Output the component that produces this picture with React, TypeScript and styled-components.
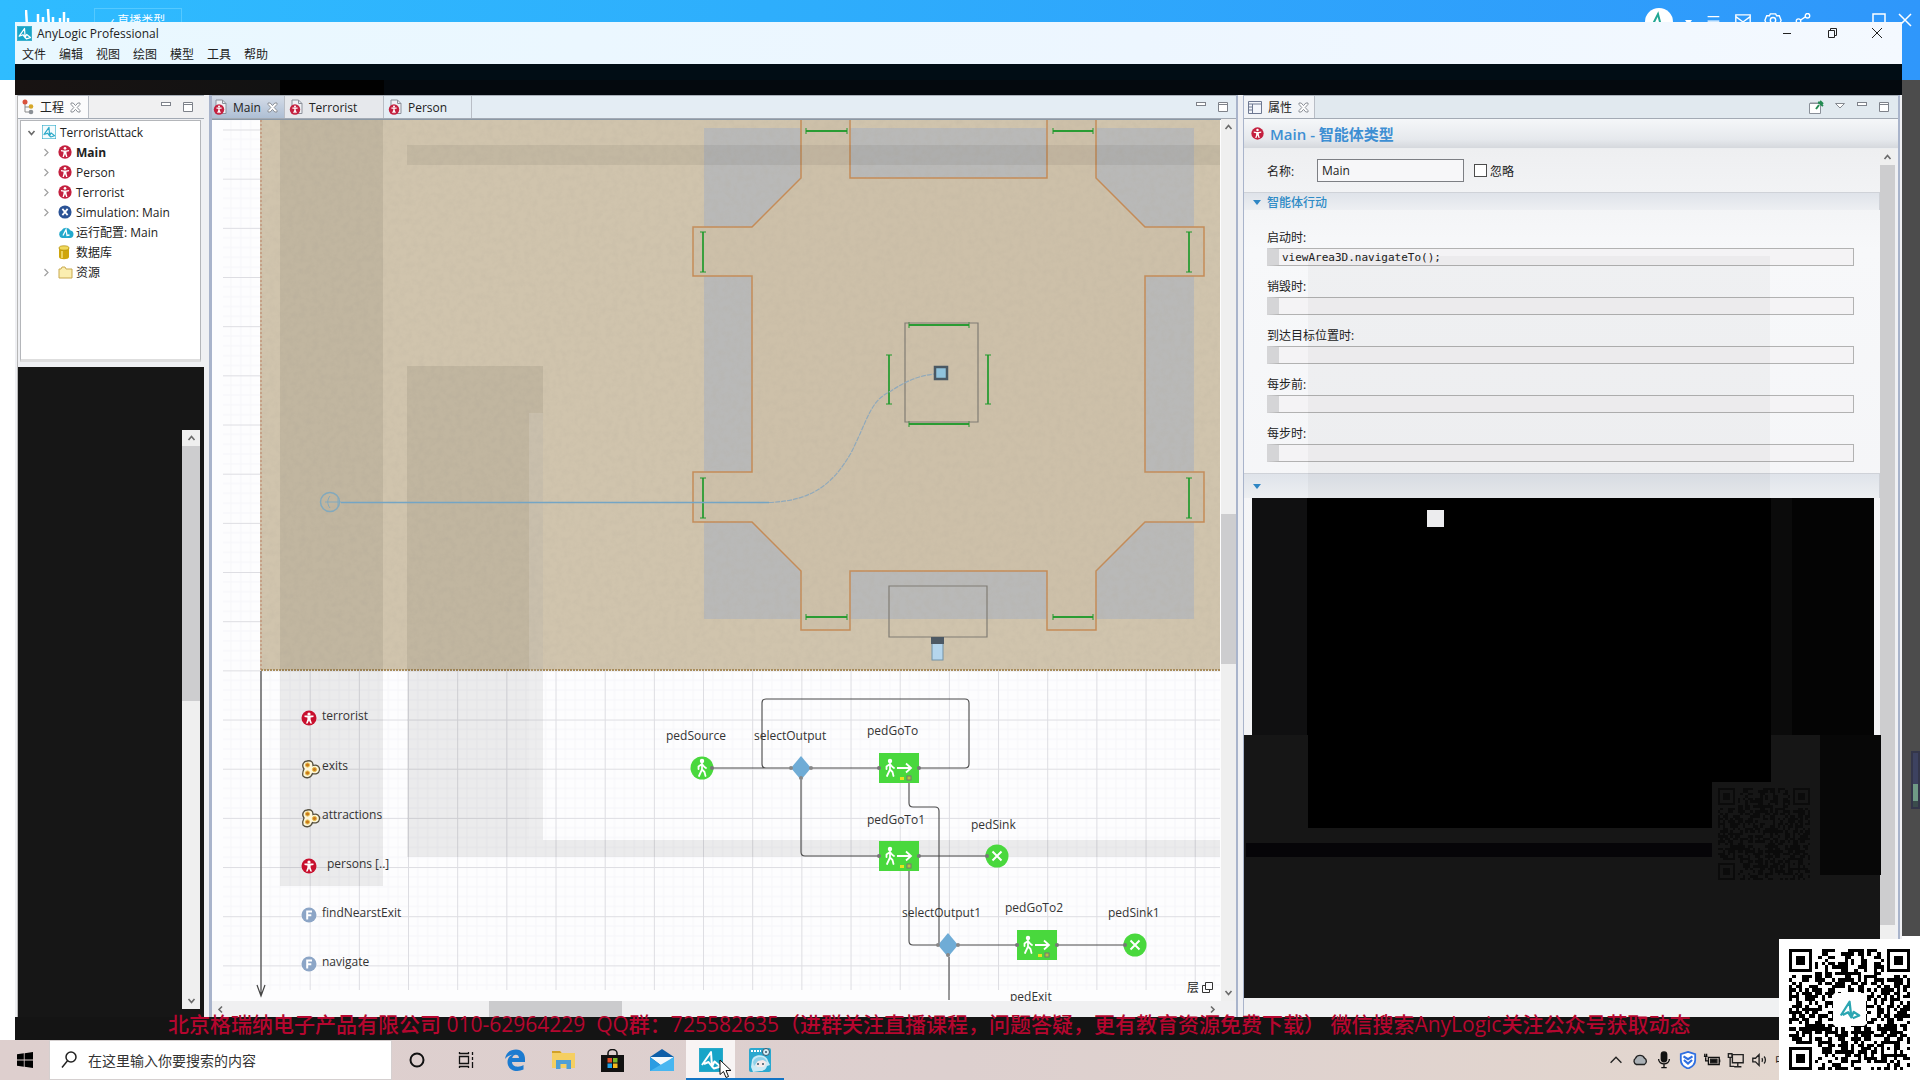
import React from "react";
import styled, { createGlobalStyle } from "styled-components";

const Global = createGlobalStyle`
  * { box-sizing: border-box; }
  body { margin: 0; overflow: hidden; background: #fff; }
  body, button, input { font-family: "Open Sans", "Noto Sans CJK SC", sans-serif; font-size: 12px; color: #222; }
  button { border: 0; padding: 0; background: none; }
  svg { display: block; flex: none; }
`;

/* ---------- shared icons ---------- */

const AgentIcon = ({ size = 14, color = "#c4203f" }: { size?: number; color?: string }) => (
  <svg width={size} height={size} viewBox="0 0 16 16">
    <circle cx="8" cy="8" r="7.6" fill={color} />
    <circle cx="8" cy="3.8" r="1.5" fill="#fff" />
    <path d="M3.4 5.6 6.8 6.2H9.2L12.6 5.6V7L9.7 7.6V9.5L10.8 13.6H9.3L8 10.3 6.7 13.6H5.2L6.3 9.5V7.6L3.4 7Z" fill="#fff" />
  </svg>
);

const LogoMark = ({ size = 16, solid = true }: { size?: number; solid?: boolean }) => (
  <svg width={size} height={size} viewBox="0 0 24 24">
    <rect x="0.5" y="0.5" width="23" height="23" fill={solid ? "#18a5c8" : "#f4fbfd"} stroke="#2aa9c9" />
    <path d="M3 17 12 4 13 18.5 9.5 14 5 16M13 18.5 15.5 13.500 21.500 18.500 15 20.500Z" fill="none" stroke={solid ? "#fff" : "#2aa9c9"} strokeWidth="2" strokeLinejoin="round" />
  </svg>
);

const CloseX = () => (
  <svg width="11" height="11" viewBox="0 0 11 11">
    <path d="M1 1H3.2L5.5 3.6 7.8 1H10V2.4L7.2 5.5 10 8.6V10H7.8L5.5 7.4 3.2 10H1V8.6L3.8 5.5 1 2.4Z" fill="#fff" stroke="#8b8f96" />
  </svg>
);

const DocAgent = () => (
  <svg width="14" height="16" viewBox="0 0 14 16">
    <path d="M3 1H9.5L13 4.5V14.5H3Z" fill="#eef0f4" stroke="#8c919b" />
    <path d="M9.5 1V4.5H13" fill="none" stroke="#8c919b" />
    <circle cx="6" cy="10.5" r="5.2" fill="#c4203f" />
    <path d="M3.4 9.2H8.6M6 9.2V11.5M6 11 4.8 14M6 11 7.2 14" stroke="#fff" strokeWidth="1.3" />
    <circle cx="6" cy="7.6" r="1" fill="#fff" />
  </svg>
);

const Min = () => (
  <svg width="12" height="12" viewBox="0 0 12 12"><rect x="1.5" y="1.5" width="9" height="3" fill="#fff" stroke="#7e828a" /></svg>
);
const Max = () => (
  <svg width="12" height="12" viewBox="0 0 12 12"><path d="M1.5 1.5H10.5V10.5H1.5ZM1.5 3.5H10.5" fill="#fff" stroke="#7e828a" /></svg>
);
const Chevron = ({ dir }: { dir: "up" | "down" | "left" | "right" }) => {
  const d = { up: "M1.5 6 4.5 2.5 7.5 6", down: "M1.5 3 4.5 6.5 7.5 3", left: "M6 1.5 3 4.5 6 7.5", right: "M3 1.5 6 4.5 3 7.5" }[dir];
  return <svg width="9" height="9" viewBox="0 0 9 9"><path d={d} fill="none" stroke="#6a6a6a" strokeWidth="1.6" /></svg>;
};

/* ---------- live-stream client behind the window ---------- */

const Desktop = styled.div`
  position: relative;
  height: 100vh;
  display: flex;
  flex-direction: column;
`;
const LiveHeader = styled.header`
  height: 80px;
  flex: none;
  display: flex;
  align-items: flex-start;
  padding: 8px 8px 0 25px;
  background: linear-gradient(90deg, #2fbcff, #2eaefc 40%, #2f97fb 100%);
`;
const LiveBack = styled.button`
  width: 88px;
  height: 26px;
  margin-left: 24px;
  border: 1px solid #55c9ff;
  color: #fff;
  line-height: 20px;
`;
const LiveTools = styled.div`
  display: flex;
  align-items: center;
  margin-left: auto;
  gap: 12px;
  color: #fff;
`;
const LiveGap = styled.div`
  width: 36px;
`;
const LiveBody = styled.div`
  flex: 1;
  display: flex;
  justify-content: flex-end;
`;
const LiveSide = styled.div`
  width: 18px;
  height: calc(100% - 104px);
  padding-top: 671px;
  background: #4c4c4c;
`;
const Meter = styled.div`
  height: 58px;
  margin-left: 9px;
  border: 2px solid #34364a;
  background: linear-gradient(#3d4260 58%, #6f9a86 58% 88%, #3b4c4c 88%);
`;

/* ---------- window frame ---------- */

const Win = styled.main`
  position: absolute;
  inset: 22px 18px 40px 15px;
  display: flex;
  flex-direction: column;
  background: #eff0f3;
`;
const TitleBar = styled.div`
  height: 22px;
  flex: none;
  display: flex;
  align-items: center;
  padding: 0 18px 0 2px;
  gap: 5px;
  background: linear-gradient(90deg, #e9f8ff, #edf6ff 60%, #f4f9ff);
`;
const WinButtons = styled.div`
  margin-left: auto;
  display: flex;
  gap: 31px;
`;
const MenuBar = styled.nav`
  height: 20px;
  flex: none;
  display: flex;
  gap: 13px;
  padding: 0 0 1px 7px;
  background: linear-gradient(90deg, #e9f8ff, #edf6ff 60%, #f4f9ff);
`;
const Strip = styled.div`
  height: 31px;
  flex: none;
  background:
    linear-gradient(90deg, #181312, #121212 265px, #010101 265px 369px, transparent 369px) 0 16px no-repeat,
    linear-gradient(#010d15 16px, #04090e 16px);
`;
const Workspace = styled.div`
  flex: 1;
  min-height: 0;
  display: grid;
  grid-template-columns: 187px minmax(0, 1fr) 657px;
  gap: 5px;
  padding: 0 2px;
`;
const Footer = styled.div`
  height: 23px;
  flex: none;
  background: #141414;
`;
const Ticker = styled.p`
  position: absolute;
  left: 153px;
  bottom: 1px;
  margin: 0;
  font-size: 21px;
  font-weight: 500;
  line-height: 30px;
  white-space: pre;
  color: #b5062f;
`;

/* ---------- panes ---------- */

const Pane = styled.section`
  min-width: 0;
  min-height: 0;
  display: flex;
  flex-direction: column;
`;
const TabRow = styled.div<{ $bg: string }>`
  height: 24px;
  flex: none;
  display: flex;
  background: ${(p) => p.$bg};
  border-top: 1px solid #a9b0b9;
  border-bottom: 1px solid #a3aab4;
`;
const Tab = styled.button<{ $w: number; $pad: number; $bg?: string }>`
  width: ${(p) => p.$w}px;
  display: flex;
  align-items: center;
  gap: 6px;
  padding-left: ${(p) => p.$pad}px;
  background: ${(p) => p.$bg ?? "transparent"};
  border-right: 1px solid #b9bec6;
`;
const PaneTools = styled.div<{ $end: number }>`
  margin-left: auto;
  display: flex;
  align-items: center;
  gap: 10px;
  padding-right: ${(p) => p.$end}px;
`;
const LeftPane = styled(Pane)`
  border-left: 1px solid #b7b7b7;
`;
const TreeBox = styled.ul`
  list-style: none;
  height: 242px;
  flex: none;
  margin: 1px 3px 5px 2px;
  padding: 1px 0 0 6px;
  background: #fff;
  border: 1px solid #b4b6ba;
  border-bottom: 3px solid #dedede;
`;
const TreeRow = styled.li<{ $depth: number; $bold?: boolean }>`
  height: 20px;
  display: grid;
  grid-template-columns: 13px 16px 1fr;
  gap: 2px;
  align-items: center;
  padding-left: ${(p) => p.$depth * 16}px;
  font-weight: ${(p) => (p.$bold ? 700 : 400)};
  white-space: nowrap;
`;
const Blackout = styled.div`
  flex: 1;
  min-height: 0;
  display: flex;
  justify-content: flex-end;
  padding: 63px 4px 8px 0;
  background: #161616;
`;
const VBar = styled.div<{ $w: number }>`
  width: ${(p) => p.$w}px;
  display: flex;
  flex-direction: column;
  align-items: center;
  justify-content: space-between;
  padding: 4px 0;
  background: #efefef;
`;
const Thumb = styled.div<{ $h: number; $gap?: number }>`
  width: 100%;
  height: ${(p) => p.$h}px;
  margin: ${(p) => p.$gap ?? 3}px 0 auto;
  background: #cdcdcf;
`;

/* ---------- editor ---------- */

const EditorPane = styled(Pane)`
  border: solid #a9b4cb;
  border-width: 0 2px 0 3px;
`;
const EditorBody = styled.div`
  flex: 1;
  min-height: 0;
  display: grid;
  grid-template-columns: minmax(0, 1fr) 15px;
  grid-template-rows: minmax(0, 1fr) 16px;
`;
const Canvas = styled.div`
  position: relative;
  overflow: hidden;
  background: #fdfdfe;
  border-top: 1px solid #8b98a5;
`;
const Drawing = styled.svg`
  position: absolute;
  top: 0;
  left: 0;
`;
const Label = styled.span<{ $x: number; $y: number }>`
  position: absolute;
  left: ${(p) => p.$x - 212}px;
  top: ${(p) => p.$y - 128}px;
  line-height: 16px;
  color: #333;
  white-space: nowrap;
`;
const Layers = styled.button`
  position: absolute;
  right: 8px;
  bottom: 5px;
  display: flex;
  align-items: center;
  gap: 3px;
`;
const HBar = styled.div`
  display: flex;
  align-items: center;
  padding: 0 4px;
  background: #f0f0f1;
`;
const HThumb = styled.div`
  width: 133px;
  height: 100%;
  margin: 0 auto 0 264px;
  background: #cbcbcd;
`;
const Corner = styled.div`
  background: #f0f0f1;
`;

const labels: [string, number, number][] = [
  ["terrorist", 322, 716], ["exits", 322, 766], ["attractions", 322, 815], ["persons [..]", 327, 864],
  ["findNearstExit", 322, 913], ["navigate", 322, 962],
  ["pedSource", 666, 736], ["selectOutput", 754, 736], ["pedGoTo", 867, 731], ["pedGoTo1", 867, 820],
  ["pedSink", 971, 825], ["selectOutput1", 902, 913], ["pedGoTo2", 1005, 908], ["pedSink1", 1108, 913],
  ["pedExit", 1010, 997],
];

const Agent = ({ y }: { y: number }) => (
  <g transform={`translate(309 ${y})`}>
    <circle r="7.5" fill="#c8102e" />
    <circle cy="-4" r="1.6" fill="#fff" />
    <path d="M-4.5 -2.4H4.5V-1L1.6 -.6V1.5L3 5.6H1.4L0 2.4-1.4 5.6H-3L-1.6 1.5V-.6L-4.5 -1Z" fill="#fff" />
  </g>
);
const Collection = ({ y }: { y: number }) => (
  <g transform={`translate(311 ${y})`}>
    <path d="M-4 -8C0 -9 2 -7 2 -3.500C6 -5 9 -2 8.500 1C8 5 4 5.500 1.500 4.500C0 9-5 10-8 7C-9 4-8 2-7 0C-10 -4-7 -8-4 -8Z" fill="#fdf6da" stroke="#55503f" strokeWidth="1.300" />
    {[[-3.5, -4], [-3.5, 4], [3.5, .5]].map(([cx, cy]) => <circle key={`${cx}${cy}`} cx={cx} cy={cy} r="2.1" fill="#c9781c" stroke="#e7c04d" />)}
  </g>
);
const Func = ({ y }: { y: number }) => (
  <g transform={`translate(309 ${y})`}>
    <circle r="7.5" fill="#8ca5c6" />
    <path d="M-1.800 4.500V-3.500H3M-1.800 .3H2.300" fill="none" stroke="#fff" strokeWidth="2" />
  </g>
);
const Walker = () => (
  <g stroke="#fff" fill="none" strokeWidth="1.800" strokeLinecap="round" strokeLinejoin="round">
    <circle cy="-7" r="1.300" fill="#fff" />
    <path d="M0 -4V1.500L-3 8M0 1.500 2.500 4 3.500 8M0 -4-3.500 -1.500-3.500 1M0 -4 2.500 -1 4 0" />
  </g>
);
const GoTo = ({ x, y }: { x: number; y: number }) => (
  <g transform={`translate(${x} ${y})`}>
    <rect x="-20" y="-15" width="40" height="30" fill="#49d83d" />
    <g transform="translate(-9 0)"><Walker /></g>
    <path d="M-2 0H11M7 -4.500 12 0 7 4.500" fill="none" stroke="#fff" strokeWidth="1.800" />
    <rect x="1" y="9" width="4" height="3" fill="#e8e320" />
    <rect x="8" y="8" width="4" height="4" fill="#b6c43a" stroke="#777" />
    <circle cx="-20" r="2" fill="#777" /><circle cx="20" r="2" fill="#777" />
  </g>
);
const Sink = ({ x, y }: { x: number; y: number }) => (
  <g transform={`translate(${x} ${y})`}>
    <circle r="11.500" fill="#49d83d" />
    <path d="M-4.500 -4.500 4.500 4.500M4.500 -4.500-4.500 4.500" stroke="#fff" strokeWidth="2" />
    <circle cx="-10" r="2" fill="#777" />
  </g>
);
const Split = ({ x, y }: { x: number; y: number }) => (
  <g transform={`translate(${x} ${y})`}>
    <path d="M0 -12 10 0 0 12-10 0Z" fill="#6facd6" />
    <circle cx="-10" r="2" fill="#888" /><circle cx="10" r="2" fill="#888" /><circle cy="10" r="2" fill="#888" />
  </g>
);

const gates = [
  "M806 131H847", "M1053 131H1093", "M806 617H847", "M1053 617H1093",
  "M703 232V272", "M1189 232V272", "M703 478V518", "M1189 478V518",
  "M909 325H969", "M909 424H969", "M889 355V404", "M988 355V404",
];

const Scene = () => (
  <Drawing width="1008" height="880" viewBox="212 120 1008 880">
    <defs>
      <pattern id="grid" x="260.500" y="129.500" width="49.170" height="49.170" patternUnits="userSpaceOnUse">
        <path d="M0 9.800H49M0 19.600H49M0 29.500H49M0 39.300H49M9.800 0V49M19.600 0V49M29.500 0V49M39.300 0V49" stroke="#f6f6f9" />
        <path d="M0 .5H49.170M.5 0V49.170" fill="none" stroke="#dddde2" />
      </pattern>
      <filter id="sand" x="0" y="0" width="100%" height="100%">
        <feTurbulence type="fractalNoise" baseFrequency="0.16" numOctaves="3" seed="4" />
        <feColorMatrix values="0 0 0 0 .45  0 0 0 0 .4  0 0 0 0 .32  .7 0 0 0 -.26" />
      </filter>
      <marker id="end" markerWidth="10" markerHeight="10" refX="5" refY="5" orient="auto" markerUnits="userSpaceOnUse">
        <path d="M5 2V8" stroke="#1f9a2a" />
      </marker>
    </defs>
    <rect x="223" y="120" width="997" height="870" fill="url(#grid)" />
    <rect x="260" y="120" width="960" height="550" fill="#d0c4ad" />
    <rect x="704" y="128" width="490" height="491" fill="#b9b9b8" />
    <path d="M801 118V178L752 227H693V276H752V472H693V522H752L801 571V630H850V571H1047V630H1096V571L1145 522H1204V472H1145V276H1204V227H1145L1096 178V118H1047V178H850V118Z" fill="#cdc0a9" stroke="#c58a55" strokeWidth="1.500" />
    <rect x="260" y="120" width="960" height="550" filter="url(#sand)" opacity=".45" />
    <path d="M261 120V670" stroke="#bc7f62" strokeDasharray="2 2" />
    <path d="M261 670H1220" stroke="#a98d5d" strokeWidth="2" strokeDasharray="2 1" />
    <path d="M261 671V995M257 985 261 996 265 985" fill="none" stroke="#444" strokeWidth="1.200" />

    <rect x="280" y="120" width="103" height="766" opacity=".07" />
    <path d="M407 366H543V840H1238V857H407Z" opacity=".07" />
    <rect x="529" y="413" width="14" height="427" fill="#fff" opacity=".13" />
    <rect x="407" y="145" width="813" height="20" opacity=".06" />

    <g stroke="#2a9c33" strokeWidth="1.800">
      {gates.map((d) => <path key={d} d={d} markerStart="url(#end)" markerEnd="url(#end)" />)}
    </g>
    <path d="M905 323H978V422H905ZM889 586H987V637H889Z" fill="none" stroke="#807c74" strokeWidth="1.200" />
    <path d="M341 502.500H769" stroke="#74a5c4" strokeWidth="1.300" />
    <path d="M769 502.500C812 501 833 484 851 453C869 417 870 401 891 391C906 381 918 376 934 374" fill="none" stroke="#90a9bb" strokeWidth="1.200" strokeDasharray="5 1" />
    <circle cx="330" cy="502" r="9.500" fill="none" stroke="#82a9bd" strokeWidth="1.500" />
    <path d="M325 502H341M330 496C327 500 327 504 330 508M338 498V506" fill="none" stroke="#82a9bd" />
    <rect x="935" y="367" width="12" height="12" fill="#90c3dc" stroke="#4a5863" strokeWidth="2.500" />
    <rect x="932" y="642" width="11" height="18" fill="#b5d6ed" stroke="#7392a6" />
    <rect x="931" y="637" width="13" height="7" fill="#4d5964" />

    <g fill="none" stroke="#4a4a4a" strokeWidth="1.100">
      <path d="M713 768H791M811 768H879M919 768H965Q969 768 969 764V703Q969 699 965 699H766Q762 699 762 703V764Q762 768 766 768" />
      <path d="M801 780V852Q801 856 805 856H879M919 856H987" />
      <path d="M909 778V803Q909 807 913 807H935Q939 807 939 811V945" />
      <path d="M909 866V941Q909 945 913 945H938M958 945H1017M1057 945H1125M949 957V1000" />
    </g>
    <g transform="translate(702 768)"><circle r="11.500" fill="#49d83d" /><Walker /><circle cx="10" r="2" fill="#777" /></g>
    <Split x={801} y={768} />
    <Split x={948} y={945} />
    <GoTo x={899} y={768} />
    <GoTo x={899} y={856} />
    <GoTo x={1037} y={945} />
    <Sink x={997} y={856} />
    <Sink x={1135} y={945} />
    <Agent y={718} />
    <Collection y={769} />
    <Collection y={818} />
    <Agent y={866} />
    <Func y={915} />
    <Func y={964} />
  </Drawing>
);

/* ---------- properties ---------- */

const PropsPane = styled(Pane)`
  position: relative;
  border: solid #a9b4cb;
  border-width: 0 2px 0 1px;
`;
const PropsTitle = styled.h1`
  height: 30px;
  flex: none;
  display: flex;
  align-items: center;
  gap: 6px;
  margin: 0;
  padding-left: 7px;
  font-size: 15px;
  font-weight: 600;
  color: #3d8fd3;
  background: linear-gradient(#f5f7f9, #e6e9ed 70%, #d5d8dd);
  border-bottom: 1px solid #eceef0;
`;
const PropsBody = styled.div`
  flex: 1;
  min-height: 0;
  display: flex;
  padding-right: 3px;
`;
const Form = styled.div`
  flex: 1;
  min-width: 0;
  display: flex;
  flex-direction: column;
  background: linear-gradient(#eeeff1, #f7f8fa 100px, #f1f1f3);
`;
const NameRow = styled.div`
  height: 43px;
  flex: none;
  display: flex;
  align-items: center;
  padding-left: 23px;
`;
const NameLabel = styled.label`
  width: 50px;
`;
const NameInput = styled.input`
  width: 147px;
  height: 23px;
  margin-right: 10px;
  padding: 0 4px;
  border: 1px solid #7d7f84;
  border-radius: 0;
  background: #f7f7f9;
`;
const Check = styled.label`
  display: flex;
  align-items: center;
  gap: 3px;
`;
const Box = styled.input`
  appearance: none;
  width: 13px;
  height: 13px;
  margin: 0;
  border: 1px solid #4c4c4c;
  background: #fff;
`;
const SectionHead = styled.button<{ $h: number }>`
  height: ${(p) => p.$h}px;
  flex: none;
  display: flex;
  align-items: center;
  gap: 6px;
  padding-left: 9px;
  border: 1px solid #cfd2d8;
  border-width: 1px 1px 0 0;
  background: linear-gradient(#dfe3ea, #edeff2);
  color: #2e8bc6;
  font-weight: 500;
`;
const Fields = styled.div`
  display: flex;
  flex-direction: column;
  gap: 11px;
  padding: 18px 26px 11px 23px;
`;
const Field = styled.label`
  display: flex;
  flex-direction: column;
  line-height: 20px;
`;
const Code = styled.input`
  width: 100%;
  height: 18px;
  padding: 0 0 0 3px;
  border: 1px solid #b2b2b2;
  border-left: 12px solid #d5d5d7;
  border-radius: 0;
  background: #f4f3f5;
  font-family: "DejaVu Sans Mono", monospace;
  font-size: 11px;
`;
const DarkTop = styled.div`
  height: 237px;
  flex: none;
  padding: 12px 0 0 175px;
  margin: 0 6px 0 8px;
  background: linear-gradient(90deg, #101011 55px, #000 55px 519px, #0b0b0b 519px 540px, #040404 540px);
`;
const Chip = styled.div`
  width: 17px;
  height: 17px;
  background: #ececee;
`;
const DarkRest = styled.div`
  flex: 1;
  min-height: 0;
  background: #161616;
`;
const FootGap = styled.div`
  height: 19px;
  flex: none;
  background: #f0f1f2;
`;
const Shade = styled.div<{ $t: number; $h: number; $l: number; $w: number; $c: string }>`
  position: absolute;
  pointer-events: none;
  top: ${(p) => p.$t}px;
  left: ${(p) => p.$l}px;
  width: ${(p) => p.$w}px;
  height: ${(p) => p.$h}px;
  background: ${(p) => p.$c};
`;
const FaintCode = styled.div`
  position: absolute;
  top: 687px;
  left: 468px;
  padding: 6px;
  background: #161616;
  pointer-events: none;
`;

/* ---------- taskbar ---------- */

const Taskbar = styled.footer`
  position: relative;
  height: 40px;
  flex: none;
  display: flex;
  background: linear-gradient(90deg, #decfce, #ddd0cf 50%, #e4d8cf);
`;
const Task = styled.button<{ $state?: "active" | "open" }>`
  width: 49px;
  display: grid;
  place-items: center;
  background: ${(p) => (p.$state === "active" ? "#f8f4f4" : "transparent")};
  box-shadow: ${(p) => (p.$state ? "inset 0 -2px #1374c4" : "none")};
`;
const Search = styled.label`
  width: 343px;
  display: flex;
  align-items: center;
  gap: 11px;
  padding-left: 11px;
  background: #fff;
  border: 1px solid #d5d0d0;
`;
const SearchInput = styled.input`
  flex: 1;
  min-width: 0;
  padding: 0;
  border: 0;
  outline: 0;
  font-size: 14px;
  &::placeholder { color: #333; opacity: 1; }
`;
const Tray = styled.div`
  margin-left: auto;
  display: flex;
  align-items: center;
  gap: 6px;
  padding-right: 133px;
`;
const Cursor = styled.svg`
  position: absolute;
  left: 719px;
  bottom: 1px;
`;
const QrCard = styled.div`
  position: absolute;
  right: 0;
  bottom: 0;
  padding: 10px;
  background: #fff;
`;
const QrLogo = styled.div`
  position: absolute;
  inset: 54px;
  display: grid;
  place-items: center;
  background: #fff;
  border-radius: 3px;
`;

const N = 37;
const qrCells = (() => {
  let s = 20217;
  let d = "";
  const corner = (x: number, y: number) => (x < 8 && y < 8) || (x > N - 9 && y < 8) || (x < 8 && y > N - 9);
  for (let y = 0; y < N; y++)
    for (let x = 0; x < N; x++) {
      s = (s * 1103515245 + 12345) % 2147483648;
      const nearAlign = Math.abs(x - 30) < 3 && Math.abs(y - 30) < 3;
      if (!corner(x, y) && !nearAlign && (s >> 16) % 100 < 52) d += `M${x} ${y}h1v1h-1z`;
    }
  return d;
})();
const QrCode = ({ size, color = "#000" }: { size: number; color?: string }) => (
  <svg width={size} height={size} viewBox="0 0 37 37" shapeRendering="crispEdges">
    <path d={qrCells} fill={color} />
    {[[0, 0], [30, 0], [0, 30]].map(([x, y]) => (
      <g key={`${x}-${y}`}>
        <rect x={x + .5} y={y + .5} width="6" height="6" fill="none" stroke={color} />
        <rect x={x + 2} y={y + 2} width="3" height="3" fill={color} />
      </g>
    ))}
    <rect x="28.500" y="28.500" width="4" height="4" fill="none" stroke={color} />
    <rect x="30" y="30" width="1" height="1" fill={color} />
  </svg>
);

const I = ({ w = 18, h = 18, vb = "0 0 20 20", children }: { w?: number; h?: number; vb?: string; children: React.ReactNode }) => (
  <svg width={w} height={h} viewBox={vb} fill="none" stroke="currentColor" strokeWidth="1.500">{children}</svg>
);

const treeItems: { name: string; icon: React.ReactNode; leaf?: boolean; bold?: boolean }[] = [
  { name: "Main", icon: <AgentIcon />, bold: true },
  { name: "Person", icon: <AgentIcon /> },
  { name: "Terrorist", icon: <AgentIcon /> },
  {
    name: "Simulation: Main",
    icon: <svg width="14" height="14" viewBox="0 0 16 16"><circle cx="8" cy="8" r="7.500" fill="#2b5396" /><path d="M5 4.500 11 11.500M11 4.500 5 11.500" stroke="#fff" strokeWidth="2" /></svg>,
  },
  {
    name: "运行配置: Main", leaf: true,
    icon: <svg width="16" height="13" viewBox="0 0 16 13"><path d="M4 12A4 4 0 0 1 3.500 4.500 5 5 0 0 1 12.500 4.500 3.800 3.800 0 0 1 12 12Z" fill="#22a9cc" /><path d="M5 9.500 8 3.500 9 9.500 11.500 9" fill="none" stroke="#fff" strokeWidth="1.300" /></svg>,
  },
  {
    name: "数据库", leaf: true,
    icon: <svg width="12" height="15" viewBox="0 0 12 15"><path d="M1 3V12C1 15 11 15 11 12V3Z" fill="#cfa50c" /><ellipse cx="6" cy="3" rx="5" ry="2.200" fill="#f1d95c" stroke="#b08c08" strokeWidth=".7" /><path d="M4 6V13" stroke="#f4e17a" strokeWidth="1.500" /></svg>,
  },
  {
    name: "资源",
    icon: <svg width="15" height="13" viewBox="0 0 15 13"><path d="M1 12V3H3L4 1H7L8 3H14V12Z" fill="#fbeeb0" stroke="#c9a94e" /></svg>,
  },
];

const menus = ["文件", "编辑", "视图", "绘图", "模型", "工具", "帮助"];
const codeFields: [string, string][] = [
  ["启动时:", "viewArea3D.navigateTo();"], ["销毁时:", ""], ["到达目标位置时:", ""], ["每步前:", ""], ["每步时:", ""],
];
const Triangle = () => <svg width="8" height="6" viewBox="0 0 8 6"><path d="M0 1H8L4 6Z" fill="#2f86c4" /></svg>;

export default function App() {
  return (
    <>
      <Global />
      <Desktop>
        <LiveHeader>
          <svg width="45" height="20" viewBox="0 0 45 20" stroke="#fff" strokeWidth="2.500" fill="none">
            <path d="M1 2 2 18M7 14V16M13 6V18M18 9V18M23 1 24 18M28 9V18M35 10V18M39 4V18M43 10V18" />
          </svg>
          <LiveBack>‹ 直播类型</LiveBack>
          <LiveTools>
            <svg width="28" height="28" viewBox="0 0 28 28"><circle cx="14" cy="14" r="14" fill="#fff" /><path d="M7 18 13 6 16 18M9 15 18 17" fill="none" stroke="#22a794" strokeWidth="2" /></svg>
            <svg width="7" height="5" viewBox="0 0 7 5"><path d="M0 0H7L3.500 5Z" fill="#fff" /></svg>
            <I><path d="M4 4H17M4 9H17M4 14H17" /></I>
            <I><path d="M2 2H18V15H2ZM2 4 10 10 18 4" /></I>
            <I><path d="M7 1H13L14 3H17L19 8 17 13H14L13 15H7L6 13H3L1 8 3 3H6Z" /><circle cx="10" cy="8" r="3" /></I>
            <I><circle cx="15" cy="3" r="2.500" /><circle cx="5" cy="9" r="2.500" /><path d="M7 8 13 4M7 10 13 14" /></I>
            <LiveGap />
            <I w={14} h={20} vb="0 0 14 20"><path d="M1 2H13V15H1Z" /></I>
            <I w={14} h={20} vb="0 0 14 20"><path d="M1 2 13 14M13 2 1 14" /></I>
          </LiveTools>
        </LiveHeader>
        <LiveBody><LiveSide><Meter /></LiveSide></LiveBody>

        <Win>
          <TitleBar>
            <LogoMark size={15} />
            <span>AnyLogic Professional</span>
            <WinButtons>
              <button aria-label="minimize"><svg width="14" height="12"><path d="M3 6.500H11" stroke="#222" /></svg></button>
              <button aria-label="restore"><svg width="14" height="12"><path d="M3.500 3.500H9.500V10.500H3.500ZM5.500 3V1.500H11.500V8.500H10" fill="none" stroke="#222" /></svg></button>
              <button aria-label="close"><svg width="14" height="12"><path d="M2 1 12 11M12 1 2 11" stroke="#222" /></svg></button>
            </WinButtons>
          </TitleBar>
          <MenuBar>{menus.map((m) => <button key={m}>{m}</button>)}</MenuBar>
          <Strip />
          <Workspace>
            <LeftPane>
              <TabRow $bg="#f0f0f1">
                <Tab $w={71} $pad={4} $bg="#fbfbfc">
                  <svg width="12" height="16" viewBox="0 0 12 16"><path d="M3 5V13H8M3 8H8" fill="none" stroke="#8b8b8b" /><circle cx="3" cy="3" r="2.500" fill="#d9523c" /><circle cx="9" cy="7.500" r="2.300" fill="#d6a72a" /><circle cx="9" cy="13" r="2.300" fill="#8b9096" /></svg>
                  <span>工程</span>
                  <CloseX />
                </Tab>
                <PaneTools $end={10}><Min /><Max /></PaneTools>
              </TabRow>
              <TreeBox>
                <TreeRow $depth={0}><Chevron dir="down" /><LogoMark size={14} solid={false} /><span>TerroristAttack</span></TreeRow>
                {treeItems.map((t) => (
                  <TreeRow key={t.name} $depth={1} $bold={t.bold}>
                    {t.leaf ? <i /> : <svg width="7" height="9" viewBox="0 0 7 9"><path d="M1.500 1 5 4.500 1.500 8" fill="none" stroke="#a0a0a0" strokeWidth="1.200" /></svg>}
                    {t.icon}
                    <span>{t.name}</span>
                  </TreeRow>
                ))}
              </TreeBox>
              <Blackout>
                <VBar $w={18}><Chevron dir="up" /><Thumb $h={255} /><Chevron dir="down" /></VBar>
              </Blackout>
            </LeftPane>

            <EditorPane>
              <TabRow $bg="#e4edf4">
                <Tab $w={73} $pad={1} $bg="linear-gradient(#d5dce8, #aebfd4)"><DocAgent /><span>Main</span><CloseX /></Tab>
                <Tab $w={99} $pad={4} $bg="#e6e8ec"><DocAgent /><span>Terrorist</span></Tab>
                <Tab $w={88} $pad={4}><DocAgent /><span>Person</span></Tab>
                <PaneTools $end={7}><Min /><Max /></PaneTools>
              </TabRow>
              <EditorBody>
                <Canvas>
                  <Scene />
                  {labels.map(([t, x, y]) => <Label key={t} $x={x} $y={y}>{t}</Label>)}
                  <Layers>
                    <span>层</span>
                    <svg width="11" height="11" viewBox="0 0 11 11" fill="none" stroke="#333"><path d="M3.500 .5H10.500V7.500H3.500ZM3 3.500H.5V10.500H7.500V8" /></svg>
                  </Layers>
                </Canvas>
                <VBar $w={15}><Chevron dir="up" /><Thumb $h={150} $gap={382} /><Chevron dir="down" /></VBar>
                <HBar><Chevron dir="left" /><HThumb /><Chevron dir="right" /></HBar>
                <Corner />
              </EditorBody>
            </EditorPane>

            <PropsPane>
              <TabRow $bg="#e1e9ef">
                <Tab $w={71} $pad={4} $bg="#f2f4f7">
                  <svg width="14" height="13" viewBox="0 0 14 13" fill="#f4f6fb" stroke="#6e7891"><path d="M.5 .5H13.500V12.500H.5ZM.5 3H13.500M4.500 3V12.500M.5 6H4.500M.5 9H4.500" /></svg>
                  <span>属性</span>
                  <CloseX />
                </Tab>
                <PaneTools $end={8}>
                  <svg width="16" height="14" viewBox="0 0 16 14"><path d="M1.500 3.500H12.500V13.500H1.500Z" fill="#fff" stroke="#8a9099" /><path d="M2 3H9" stroke="#8a9099" /><path d="M8 9 11 5M10 2 15 6M12 1 15 4" stroke="#248b52" strokeWidth="2" /></svg>
                  <svg width="12" height="12" viewBox="0 0 12 12"><path d="M1.500 2.500H10.500L6 7Z" fill="#fff" stroke="#858990" /></svg>
                  <Min /><Max />
                </PaneTools>
              </TabRow>
              <PropsTitle><AgentIcon size={13} /><span>Main - 智能体类型</span></PropsTitle>
              <PropsBody>
                <Form>
                  <NameRow>
                    <NameLabel htmlFor="agent-name">名称:</NameLabel>
                    <NameInput id="agent-name" defaultValue="Main" />
                    <Check><Box type="checkbox" />忽略</Check>
                  </NameRow>
                  <SectionHead $h={18}><Triangle />智能体行动</SectionHead>
                  <Fields>
                    {codeFields.map(([label, value]) => (
                      <Field key={label}>{label}<Code defaultValue={value} /></Field>
                    ))}
                  </Fields>
                  <SectionHead $h={25} aria-label="section"><Triangle /></SectionHead>
                  <DarkTop><Chip /></DarkTop>
                  <DarkRest />
                </Form>
                <VBar $w={15}><Chevron dir="up" /><Thumb $h={760} /></VBar>
              </PropsBody>
              <FootGap />
              <Shade $t={161} $h={242} $l={64} $w={462} $c="rgba(0,0,0,.03)" />
              <Shade $t={640} $h={93} $l={64} $w={463} $c="#000" />
              <Shade $t={640} $h={140} $l={576} $w={61} $c="#070707" />
              <Shade $t={748} $h={14} $l={2} $w={472} $c="#060508" />
              <FaintCode><QrCode size={92} color="#0b0b0b" /></FaintCode>
            </PropsPane>
          </Workspace>
          <Footer />
          <Ticker>北京格瑞纳电子产品有限公司 010-62964229  QQ群：725582635（进群关注直播课程，问题答疑，更有教育资源免费下载） 微信搜索AnyLogic关注公众号获取动态</Ticker>
        </Win>

        <Taskbar>
          <Task aria-label="start"><svg width="16" height="16" viewBox="0 0 16 16"><path d="M0 2.300 6.800 1.300V7.600H0ZM7.600 1.200 16 0V7.600H7.600ZM0 8.400H6.800V14.700L0 13.700ZM7.600 8.400H16V16L7.600 14.800Z" /></svg></Task>
          <Search>
            <I w={16} h={18} vb="0 0 16 18"><circle cx="10" cy="6" r="5" stroke="#222" /><path d="M6.500 9.800 1 16.500" stroke="#222" /></I>
            <SearchInput placeholder="在这里输入你要搜索的内容" />
          </Search>
          <Task aria-label="assistant"><svg width="18" height="18"><circle cx="9" cy="9" r="6.500" fill="none" stroke="#111" strokeWidth="2" /></svg></Task>
          <Task aria-label="task view"><svg width="18" height="18" fill="none" stroke="#111" strokeWidth="1.300"><path d="M2.500 5.500H11.500V12.500H2.500ZM2 2.500H12M2.500 1V3M11.500 1V3M2 15.500H12M2.500 15V17M11.500 15V17M15.500 1V4M15.500 6V9M15.500 11V17" /></svg></Task>
          <Task aria-label="edge"><svg width="22" height="22" viewBox="0 0 22 22"><path d="M1 10C2 3 7 .5 12 .5C18 .5 21 5 21 10V13H8C8 18 15 19 19.500 16V20.500C12 24 3.500 21 3.500 13C3.500 9 6 6.500 9 5.500C5 6 2.500 8 1 10ZM8.200 9H15C15 4.500 9 4.500 8.200 9Z" fill="#1c7bd0" fillRule="evenodd" /></svg></Task>
          <Task aria-label="explorer"><svg width="23" height="20" viewBox="0 0 23 20"><path d="M0 1H8L10 3H23V18H0Z" fill="#f5cf62" /><path d="M0 1H8L9.500 3H0Z" fill="#d2a127" /><path d="M4 19V10H19V19H14.500V14H8.500V19Z" fill="#4f9fd6" /></svg></Task>
          <Task aria-label="store"><svg width="23" height="23" viewBox="0 0 23 23"><path d="M7 6V4A4.500 3.500 0 0 1 16 4V6" fill="none" stroke="#111" strokeWidth="1.500" /><rect y="6" width="23" height="17" fill="#111" /><path d="M6.500 9H11V13.500H6.500Z" fill="#e4502a" /><path d="M12 9H16.500V13.500H12Z" fill="#7db928" /><path d="M6.500 14.500H11V19H6.500Z" fill="#20a3e8" /><path d="M12 14.500H16.500V19H12Z" fill="#f6b91b" /></svg></Task>
          <Task aria-label="mail"><svg width="24" height="22" viewBox="0 0 24 22"><path d="M0 8 12 0 24 8V22H0Z" fill="#0d5ea8" /><path d="M0 8H24L12 17Z" fill="#f2f8fc" /><path d="M0 8 12 17 24 8V22H0Z" fill="#2b9de2" /><path d="M0 22 24 8V22Z" fill="#48b6f0" /></svg></Task>
          <Task aria-label="anylogic" $state="active"><LogoMark size={24} /></Task>
          <Task aria-label="live client" $state="open"><svg width="22" height="24" viewBox="0 0 22 24"><rect width="22" height="24" rx="2" fill="#2ba8cf" /><path d="M2 3H12" stroke="#fff" strokeWidth="2" strokeDasharray="2 1" /><circle cx="17" cy="4" r="3.500" fill="#d7eef6" stroke="#35556a" /><circle cx="17" cy="4" r="1" fill="#35556a" /><path d="M3 12C5 5 18 6 19 13L21 17 18 18C17 22 14 23 11 23L4 24 2 19Z" fill="#cdeaf5" /><path d="M6 13 9 10 15 11 17 15 15 19H8Z" fill="#f7e9e8" /><path d="M4 14C6 8 16 7 18 14L14 12 9 13 5 18Z" fill="#8fd0e8" /><circle cx="9" cy="16" r="1" fill="#35556a" /><circle cx="14" cy="16" r="1" fill="#35556a" /></svg></Task>
          <Tray>
            <I><path d="M4 13 10 7 16 13" stroke="#222" /></I>
            <I><path d="M6 15A4 4 0 0 1 5 8 5.500 5.500 0 0 1 15 8 4 4 0 0 1 15 15Z" fill="#aab0b5" stroke="#222" /></I>
            <I><rect x="7" y="1" width="6" height="11" rx="3" fill="#111" stroke="#111" /><path d="M4 9C4 16 16 16 16 9M10 15V18M7 18.500H13" stroke="#111" /></I>
            <I><path d="M10 1 18 3.500V10C18 15 14 18 10 19.500 6 18 2 15 2 10V3.500Z" fill="#fff" stroke="#2f6fe0" strokeWidth="2" /><path d="M5 6 10 9 15 6M5.500 10 10 14 14.500 10" stroke="#2f6fe0" strokeWidth="2.500" /></I>
            <I><path d="M6 7H18V15H6ZM18.500 9.500V12.500M1 6H5M2 3V6M4 3V6M3 7V11H6" stroke="#111" /><path d="M8.500 9H15.500V13H8.500Z" fill="#111" /></I>
            <I><path d="M6 4H18V13H6ZM12 13V17M8 17.500H16M1.500 3H5.500V7H1.500ZM3.500 7V17H8" stroke="#222" /></I>
            <I><path d="M2 8H5L9 4V16L5 12H2ZM12 8C13 9 13 11 12 12M14.500 6C16.500 8 16.500 12 14.500 14" stroke="#222" /></I>
            <span>中</span>
          </Tray>
          <Cursor width="14" height="20" viewBox="0 0 14 20"><path d="M1 1V15.500L4.500 12.500 7 18.500 9.500 17.500 7 11.500H12Z" fill="#fff" stroke="#111" /></Cursor>
        </Taskbar>
        <QrCard>
          <QrCode size={121} />
          <QrLogo>
            <svg width="22" height="22" viewBox="0 0 24 24"><path d="M2 18 11.500 3 13.500 20 10 14.500 4 17.500M13.500 20 16 14 22 18 15 21" fill="none" stroke="#2ba6b2" strokeWidth="2.500" strokeLinejoin="round" /></svg>
          </QrLogo>
        </QrCard>
      </Desktop>
    </>
  );
}
